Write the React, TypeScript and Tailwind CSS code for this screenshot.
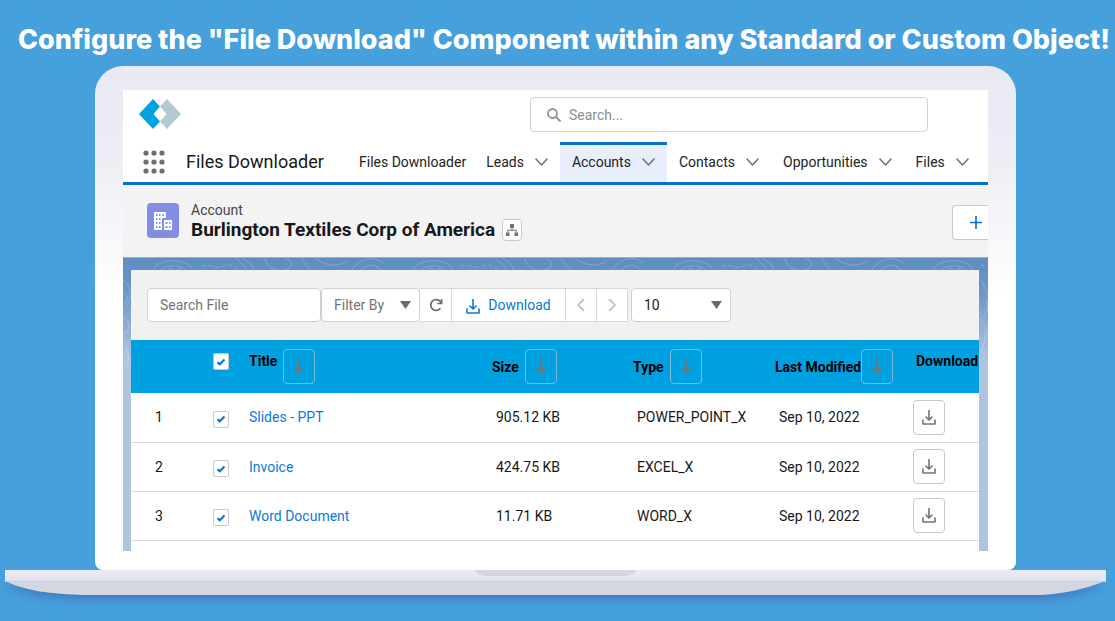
import { useState } from 'react';
import type { ReactNode } from 'react';

const navItems = [
  { label: 'Files Downloader', hasMenu: false, active: false },
  { label: 'Leads', hasMenu: true, active: false },
  { label: 'Accounts', hasMenu: true, active: true },
  { label: 'Contacts', hasMenu: true, active: false },
  { label: 'Opportunities', hasMenu: true, active: false },
  { label: 'Files', hasMenu: true, active: false },
];

const files = [
  { id: 1, title: 'Slides - PPT', size: '905.12 KB', type: 'POWER_POINT_X', modified: 'Sep 10, 2022' },
  { id: 2, title: 'Invoice', size: '424.75 KB', type: 'EXCEL_X', modified: 'Sep 10, 2022' },
  { id: 3, title: 'Word Document', size: '11.71 KB', type: 'WORD_X', modified: 'Sep 10, 2022' },
];

function Logo() {
  return (
    <svg width="44" height="32" viewBox="0 0 44 32" aria-hidden="true">
      <path d="M15 1 1 16l14 15 7-7.500-6.500-7.500L22 8.500z" fill="#00a1e0" />
      <path d="M29 1l14 15-14 15-7-7.500 6.500-7.500L22 8.500z" fill="#b4cad3" />
    </svg>
  );
}

function Chevron() {
  return (
    <svg width="13" height="8" viewBox="0 0 13 8" fill="none" stroke="#747474" strokeWidth="1.6" aria-hidden="true">
      <path d="M1 1l5.500 6L12 1" strokeLinecap="round" strokeLinejoin="round" />
    </svg>
  );
}

function DownloadIcon({ className }: { className: string }) {
  return (
    <svg viewBox="0 0 14 15" fill="none" stroke="currentColor" strokeWidth="1.6" className={className} aria-hidden="true">
      <path d="M7 .5v9M4 7l3 3 3-3M1 10v4h12v-4" strokeLinecap="round" strokeLinejoin="round" />
    </svg>
  );
}

// contour lines behind the record page
function Topography() {
  return (
    <svg className="absolute inset-x-0 top-0 h-[110px] w-full" fill="none" aria-hidden="true">
      <defs>
        <pattern id="topo" width="260" height="110" patternUnits="userSpaceOnUse">
          <g stroke="#fff" strokeOpacity=".2" strokeWidth="1" fill="none">
            <path d="M30 14c0-14 38-16 40 0M36 16c2-10 26-12 29 0M43 15l4-5 5 3 5-3 3 6" />
            <path d="M78 8c10-3 14 4 22 0s14 2 14 6" strokeDasharray="4 3" />
            <path d="M118 0c8 3 14 8 12 16M112 0c4 4 14 8 10 16M142 0c2 16 24 14 26 8s-4-6-6-8" />
            <path d="M178 0c6 10 10 14 22 18M192 0c10 8 24 10 32 2" />
            <path d="M228 16c2-14 26-22 34-8M236 16c4-10 16-12 22-4" />
            <path d="M0 22c8 6 10 18 2 28M0 60c8 2 8 14 0 16M4 84c-2 6 4 14 0 26M1 36c5 2 4 8 0 10" />
            <path d="M78 22c8 14 10 26 2 38M82 40c4 8 4 20 2 40M76 60c8 6 8 20 2 34" />
          </g>
        </pattern>
      </defs>
      <rect width="100%" height="110" fill="url(#topo)" />
    </svg>
  );
}

function Checkbox({ label }: { label: string }) {
  const [checked, setChecked] = useState(true);
  return (
    <label className="grid size-4 place-items-center">
      <input
        type="checkbox"
        aria-label={label}
        checked={checked}
        onChange={(e) => setChecked(e.target.checked)}
        className="col-start-1 row-start-1 h-[17px] w-4 appearance-none rounded-xs border border-[#c9c9c9] bg-white"
      />
      {checked && (
        <svg width="10" height="8" viewBox="0 0 10 8" className="pointer-events-none col-start-1 row-start-1" aria-hidden="true">
          <path d="M1.500 4.200 3.700 6.300 8.500 1.500" fill="none" stroke="#0070d2" strokeWidth="2" />
        </svg>
      )}
    </label>
  );
}

function SortButton({ column }: { column: string }) {
  return (
    <button
      type="button"
      aria-label={`Sort by ${column}`}
      className="grid h-[35px] w-8 shrink-0 place-items-center rounded border border-[#7fb9d4]"
    >
      <svg width="10" height="15" viewBox="0 0 10 15" fill="none" stroke="#747474" strokeWidth="2" aria-hidden="true">
        <path d="M5 1v12M1.500 9.500 5 13.500l3.500-4" strokeLinecap="round" strokeLinejoin="round" />
      </svg>
    </button>
  );
}

function Dropdown({ label, value, className }: { label: string; value: string; className: string }) {
  return (
    <div className={`grid items-center ${className}`}>
      <select
        aria-label={label}
        defaultValue={value}
        className="col-start-1 row-start-1 h-full w-full appearance-none rounded border border-[#d0d0d0] bg-white pl-3"
      >
        <option>{value}</option>
      </select>
      <svg
        width="11"
        height="8"
        viewBox="0 0 11 8"
        className="pointer-events-none col-start-1 row-start-1 mr-[9px] justify-self-end"
        aria-hidden="true"
      >
        <path d="M0 0h11L5.500 8z" fill="#6b6b6b" />
      </svg>
    </div>
  );
}

function ToolButton({ label, className, children }: { label: string; className: string; children: ReactNode }) {
  return (
    <button
      type="button"
      aria-label={label}
      className={`flex items-center justify-center border-y border-r border-[#d8d8d8] bg-white ${className}`}
    >
      {children}
    </button>
  );
}

function GlobalHeader() {
  return (
    <header className="bg-white">
      <div className="flex h-[52px] items-start pt-[7px] pr-[60px] pl-[15px]">
        <div className="pt-px">
          <Logo />
        </div>
        <label className="ml-auto flex h-[35px] w-[398px] items-center gap-2 rounded border border-[#d0d0d0] pl-4">
          <svg width="14" height="14" viewBox="0 0 14 14" fill="none" stroke="#939393" strokeWidth="1.800" aria-hidden="true">
            <circle cx="5.500" cy="5.500" r="4.500" />
            <path d="M9 9l4 4" strokeLinecap="round" />
          </svg>
          <input
            type="text"
            aria-label="Search"
            placeholder="Search..."
            className="min-w-0 flex-1 outline-none placeholder:text-[#8e8e8e]"
          />
        </label>
      </div>
      <nav className="flex h-[43px] border-b-[3px] border-[#0b6fd0] pl-5">
        <button type="button" aria-label="App Launcher" className="shrink-0 self-center">
          <svg width="23" height="24" viewBox="0 0 23 24" fill="#706e6b" aria-hidden="true">
            {[3, 12, 21].map((y) =>
              [3, 11, 19].map((x) => <circle key={`${x}-${y}`} cx={x} cy={y} r="2.600" />),
            )}
          </svg>
        </button>
        <span className="w-[181px] shrink-0 self-center pl-5 text-lg leading-6 whitespace-nowrap text-[#181818]">
          Files Downloader
        </span>
        {navItems.map(({ label, hasMenu, active }) => (
          <a
            key={label}
            href="#"
            className={`flex shrink-0 items-center gap-[11px] pl-3 whitespace-nowrap ${hasMenu ? 'pr-3' : 'pr-2'} ${
              active ? 'border-t-[3px] border-[#0b6fd0] bg-[#e8eefb] pb-[3px]' : ''
            }`}
          >
            {label}
            {hasMenu && <Chevron />}
          </a>
        ))}
      </nav>
    </header>
  );
}

function RecordHeader() {
  return (
    <div className="relative flex h-[73px] items-start border-b border-[#a9adb3] bg-[#f3f3f3] pt-[18px] pl-6 shadow-[0_1px_2px_rgba(0,0,0,0.3)]">
      <div className="grid h-[35px] w-8 shrink-0 place-items-center rounded bg-[#838de2]">
        <svg width="20" height="20" viewBox="0 0 20 20" aria-hidden="true">
          <path d="M1 1h12v6H9v12H1zM11 9h8v10h-8z" fill="#fff" />
          <path
            d="M3 3h1.500v2H3zM6 3h1.500v2H6zM9.200 3h1.500v2H9.200zM3 7h1.500v2H3zM6 7h1.500v2H6zM3 11h1.500v2H3zM6 11h1.500v2H6zM3 15h1.500v2H3zM6 15h1.500v2H6zM12.500 11h2v2h-2zM16 11h1.500v2H16zM12.500 15h2v2h-2zM16 15h1.500v2H16z"
            fill="#838de2"
          />
        </svg>
      </div>
      <div className="ml-3">
        <p className="leading-[15px] text-[#444]">Account</p>
        <div className="flex items-center gap-[7px]">
          <h2 className="text-[19px] leading-6 font-bold whitespace-nowrap text-[#181818]">
            Burlington Textiles Corp of America
          </h2>
          <button
            type="button"
            aria-label="View account hierarchy"
            className="grid h-[22px] w-5 place-items-center rounded border border-[#c9c9c9] bg-white"
          >
            <svg width="12" height="12" viewBox="0 0 12 12" fill="#706e6b" aria-hidden="true">
              <path d="M4 0h4v4H4zM0 8.500h3.500V12H0zM8.500 8.500H12V12H8.500z" />
              <path d="M6 4v2.500M1.800 8.500V6.200h8.400v2.300" fill="none" stroke="#706e6b" />
            </svg>
          </button>
        </div>
      </div>
      <button
        type="button"
        aria-label="Follow"
        className="mt-0.5 ml-auto flex h-[35px] w-9 items-center justify-end rounded-l border-y border-l border-[#c9c9c9] bg-white pr-1.5"
      >
        <svg width="12" height="13" viewBox="0 0 12 13" stroke="#0070d2" strokeWidth="1.600" aria-hidden="true">
          <path d="M6 0v13M0 6.500h12" />
        </svg>
      </button>
    </div>
  );
}

function Toolbar() {
  return (
    <div className="flex h-[70px] items-center bg-[#f1f1f1] pl-4">
      <input
        type="text"
        aria-label="Search File"
        placeholder="Search File"
        className="h-[34px] w-[174px] rounded border border-[#d0d0d0] bg-white px-3 placeholder:text-[#747474]"
      />
      <Dropdown label="Filter By" value="Filter By" className="h-[34px] w-[99px] text-[#747474]" />
      <ToolButton label="Refresh" className="h-[34px] w-8">
        <svg width="14" height="14" viewBox="0 0 14 14" fill="none" stroke="#706e6b" strokeWidth="1.700" aria-hidden="true">
          <path d="M11.500 10.200A5.400 5.400 0 1 1 11.300 3.500L12.300 5" />
          <path d="M12.600 1v4.500H8.300" />
        </svg>
      </ToolButton>
      <ToolButton label="Download" className="h-[34px] w-[114px] gap-2 text-[#0b78d8]">
        <DownloadIcon className="mt-0.5 h-[15px] w-3.5" />
        Download
      </ToolButton>
      <ToolButton label="Previous page" className="h-[34px] w-[31px]">
        <svg width="8" height="14" viewBox="0 0 8 14" fill="none" stroke="#c4c4c4" strokeWidth="1.800" aria-hidden="true">
          <path d="M7 1 1 7l6 6" />
        </svg>
      </ToolButton>
      <ToolButton label="Next page" className="h-[34px] w-[31px]">
        <svg width="8" height="14" viewBox="0 0 8 14" fill="none" stroke="#c4c4c4" strokeWidth="1.800" aria-hidden="true">
          <path d="m1 1 6 6-6 6" />
        </svg>
      </ToolButton>
      <Dropdown label="Rows per page" value="10" className="ml-[3px] h-[34px] w-[100px] text-[#181818]" />
    </div>
  );
}

function FileTable() {
  return (
    <table className="w-full table-fixed border-collapse text-left">
      <colgroup>
        <col className="w-[82px]" />
        <col className="w-[28px]" />
        <col />
        <col className="w-[141px]" />
        <col className="w-[142px]" />
        <col className="w-[141px]" />
        <col className="w-[71px]" />
      </colgroup>
      <thead className="bg-[#00a1e1] text-black">
        <tr className="h-[53px] align-top">
          <th aria-label="Row number" />
          <th className="pt-[13px]">
            <Checkbox label="Select all files" />
          </th>
          <th className="pt-[9px] pl-2">
            <div className="flex gap-1.5 leading-6">
              Title
              <SortButton column="Title" />
            </div>
          </th>
          <th className="pt-[9px] pl-2">
            <div className="flex items-center gap-1.5">
              Size
              <SortButton column="Size" />
            </div>
          </th>
          <th className="pt-[9px] pl-2">
            <div className="flex items-center gap-1.5">
              Type
              <SortButton column="Type" />
            </div>
          </th>
          <th className="pt-[9px] pl-2">
            <div className="flex items-center whitespace-nowrap">
              Last Modified
              <SortButton column="Last Modified" />
            </div>
          </th>
          <th className="overflow-hidden pt-[9px] pl-2 leading-6">Download</th>
        </tr>
      </thead>
      <tbody className="text-[#181818]">
        {files.map((file) => (
          <tr key={file.id} className="h-[49px] border-b border-[#dcdcdc]">
            <td className="pl-6">{file.id}</td>
            <td className="pt-[3px]">
              <Checkbox label={`Select ${file.title}`} />
            </td>
            <td className="pl-2">
              <a href="#" className="text-[#0b78d8]">
                {file.title}
              </a>
            </td>
            <td className="pl-3">{file.size}</td>
            <td className="pl-3">{file.type}</td>
            <td className="pl-3">{file.modified}</td>
            <td className="pl-[5px]">
              <button
                type="button"
                aria-label={`Download ${file.title}`}
                className="grid h-[35px] w-8 place-items-center rounded border border-[#c9c9c9] text-[#747474]"
              >
                <DownloadIcon className="h-[15px] w-3.5" />
              </button>
            </td>
          </tr>
        ))}
      </tbody>
    </table>
  );
}

function LaptopBase() {
  return (
    <div className="mx-[5px]">
      <div className="flex h-[11px] justify-center bg-[#e9e9f3]">
        <div className="h-1.5 w-[161px] bg-[#d6d6df] [border-radius:0_0_12px_12px/0_0_6px_6px]" />
      </div>
      <svg
        viewBox="0 0 1101 14"
        preserveAspectRatio="none"
        className="block h-3.5 w-full overflow-visible drop-shadow-[0_4px_5px_rgba(60,80,170,0.5)]"
        aria-hidden="true"
      >
        <path d="M0 0h1101c-22 8-42 13-66 14H80C44 13 22 10 0 0z" fill="#d6d6df" />
        <path d="M0 0h1101v1H0z" fill="#bcd4ea" />
      </svg>
    </div>
  );
}

export default function App() {
  return (
    <main className="min-h-screen overflow-hidden bg-[#45a0db] font-['Roboto',sans-serif] text-sm text-[#222]">
      <h1 className="pt-[22px] pb-2 pl-[18px] font-['Inter',sans-serif] text-[27px] leading-9 font-extrabold whitespace-nowrap text-white">
        Configure the "File Download" Component within any Standard or Custom Object!
      </h1>

      <div className="mr-1 pb-6">
        {/* laptop lid */}
        <div className="mx-[95px] rounded-t-[28px] rounded-b-lg bg-[linear-gradient(#e9e9f3_0px,#ededf5_90px,#ffffff_230px)] px-7 pt-6 pb-[19px]">
          <div className="overflow-hidden">
            <GlobalHeader />
            <RecordHeader />
            <div className="relative bg-[linear-gradient(#5f8dbf_0px,#6b97c8_35px,#b0c4df_100px)] pt-3 pr-[9px] pl-2">
              <Topography />
              <div className="relative overflow-hidden bg-white pb-2.5">
                <Toolbar />
                <FileTable />
              </div>
            </div>
          </div>
        </div>

        <LaptopBase />
      </div>
    </main>
  );
}
